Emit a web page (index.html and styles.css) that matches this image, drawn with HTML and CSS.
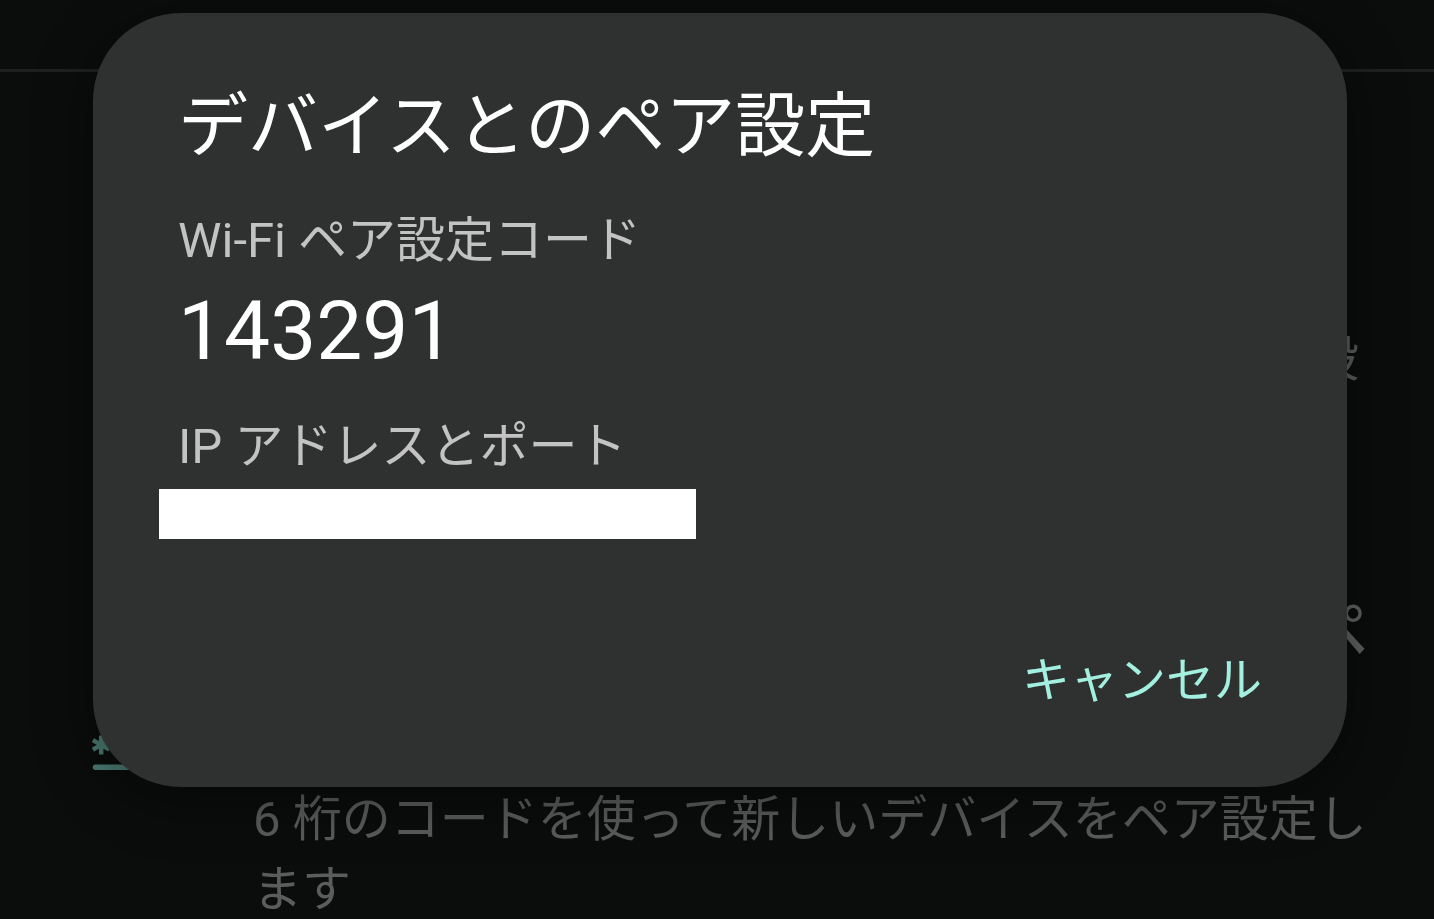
FILE: index.html
```html
<!DOCTYPE html>
<html lang="ja">
<head>
<meta charset="utf-8">
<title>ワイヤレス デバッグ</title>
<link rel="stylesheet" href="styles.css">
</head>
<body>
<div class="screen">
  <header class="appbar"></header>
  <main class="list">
    <section class="item item-qr">
      <div class="item-icon"></div>
      <div class="item-text">
        <div class="item-title">QR コードによるデバイスのペア設定</div>
        <div class="item-summary">QR コードをスキャンして新しいデバイスをペア設定します</div>
      </div>
    </section>
    <section class="item item-code">
      <div class="item-icon">
        <svg class="pin-icon" viewBox="0 0 24 24" aria-hidden="true">
          <g class="stars">
            <path d="M4 6.6v6.8M1.05 8.3l5.9 3.4M1.05 11.7l5.9-3.4"/>
            <path d="M12 6.6v6.8M9.05 8.3l5.9 3.4M9.05 11.7l5.9-3.4"/>
            <path d="M20 6.6v6.8M17.05 8.3l5.9 3.4M17.05 11.7l5.9-3.4"/>
          </g>
          <rect class="bar" x="1" y="17" width="22" height="2" rx="1"/>
        </svg>
      </div>
      <div class="item-text">
        <div class="item-title">ペア設定コードによるデバイスのペア設定</div>
        <div class="item-summary">6 桁のコードを使って新しいデバイスをペア設定します</div>
      </div>
    </section>
  </main>
</div>

<div class="dialog" role="dialog" aria-labelledby="dlg-title">
  <h1 class="dialog-title" id="dlg-title">デバイスとのペア設定</h1>
  <div class="label label-code">Wi-Fi ペア設定コード</div>
  <div class="code">143291</div>
  <div class="label label-ip">IP アドレスとポート</div>
  <div class="redacted"></div>
  <div class="actions">
    <button class="text-btn" type="button">キャンセル</button>
  </div>
</div>
</body>
</html>
```

FILE: styles.css
```css
html, body {
  margin: 0;
  padding: 0;
}

body {
  width: 1434px;
  height: 919px;
  overflow: hidden;
  background: #0b0c0c;
  font-family: "Roboto", "Noto Sans CJK JP", sans-serif;
}

.screen {
  display: flex;
  flex-direction: column;
  height: 919px;
}

.appbar {
  height: 69px;
  border-bottom: 3px solid #1f2020;
  flex: none;
}

.list {
  display: flex;
  flex-direction: column;
}

.item {
  display: flex;
  padding-left: 90px;
}

.item-qr {
  padding-top: 85px;
  padding-bottom: 60px;
}

.item-code {
  padding-top: 65px;
}

.item-icon {
  width: 67px;
  margin-right: 96px;
  flex: none;
}

.item-code .item-icon {
  padding-top: 127px;
}

.pin-icon {
  display: block;
  width: 67px;
  height: 67px;
}

.pin-icon .stars {
  fill: none;
  stroke: #4c7d75;
  stroke-width: 1.6;
}

.pin-icon .bar {
  fill: #4c7d75;
}

.item-text {
  width: 1147px;
  flex: none;
}

.item-title {
  font-size: 70px;
  line-height: 84px;
  color: #606161;
}

.item-summary {
  font-size: 49px;
  line-height: 70px;
  color: #5b5c5c;
}

.item-qr .item-summary {
  padding-left: 4px;
}

.item-code .item-summary {
  margin-top: 27px;
}

/* Dialog overlay */
.dialog {
  position: fixed;
  left: 93px;
  top: 13px;
  width: 1254px;
  height: 774px;
  box-sizing: border-box;
  padding: 72px 85px 74px 85px;
  background: #2f3030;
  border-radius: 88px;
  box-shadow: 0 12px 60px rgba(0, 0, 0, 0.45);
  display: flex;
  flex-direction: column;
}

.dialog-title {
  margin: 0;
  font-size: 70px;
  line-height: 84px;
  font-weight: 400;
  color: #ffffff;
}

.label {
  color: #c3c3c3;
  font-size: 49px;
  line-height: 64px;
}

.label-code {
  margin-top: 40px;
}

.code {
  margin-top: 10px;
  font-size: 82px;
  line-height: 96px;
  color: #ffffff;
}

.label-ip {
  margin-top: 36px;
}

.redacted {
  margin-top: 10px;
  margin-left: -19px;
  width: 537px;
  height: 50px;
  background: #ffffff;
}

.actions {
  margin-top: auto;
  display: flex;
  justify-content: flex-end;
}

.text-btn {
  font-family: inherit;
  font-size: 48px;
  line-height: 64px;
  color: #a3f0e1;
  background: none;
  border: 0;
  padding: 0;
  margin: 0;
}
```
